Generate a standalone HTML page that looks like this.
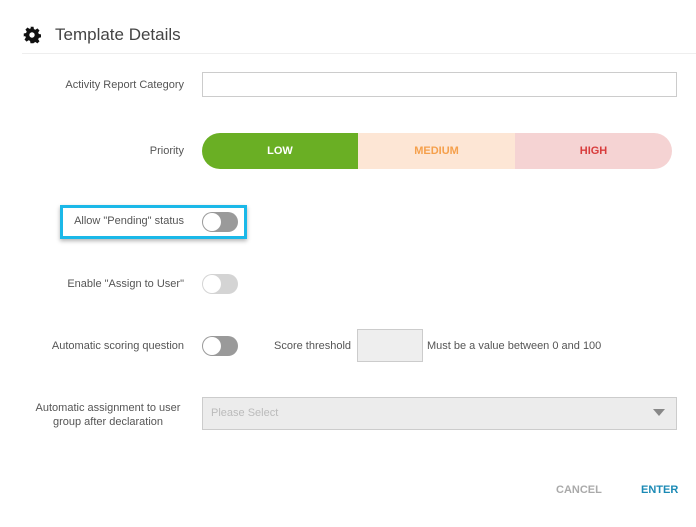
<!DOCTYPE html><html><head><style>
body{margin:0;width:696px;height:527px;background:#fff;font-family:"Liberation Sans",sans-serif;position:relative;overflow:hidden;color:#555}
.a{position:absolute}
.lbl{position:absolute;right:512px;font-size:11px;color:#555;text-align:right;white-space:nowrap}
.tg{position:absolute;left:202px;width:36px;height:20px;border-radius:10px;background:#9a9a9a}
.tg::after{content:"";position:absolute;left:1px;top:1px;width:18px;height:18px;border-radius:50%;background:#fff}
</style></head><body>
<svg class="a" style="left:23px;top:26px" width="18" height="18" viewBox="0 0 24 24"><path fill="#111" d="M10 1h4l.6 3.1 2 .9 2.6-1.8 2.8 2.8-1.8 2.6.9 2 3.1.6v4l-3.1.6-.9 2 1.8 2.6-2.8 2.8-2.6-1.8-2 .9L14 23h-4l-.6-3.1-2-.9-2.6 1.8-2.8-2.8 1.8-2.6-.9-2L1 14v-4l3.1-.6.9-2L3.2 4.8 6 2l2.6 1.8 2-.9z"/><circle cx="12" cy="12" r="3.6" fill="#fff"/></svg>
<div class="a" style="left:55px;top:25px;font-size:17px;color:#444">Template Details</div>
<div class="a" style="left:22px;top:53px;width:674px;height:1px;background:#eee"></div>
<div class="lbl" style="top:79px">Activity Report Category</div>
<div class="a" style="left:202px;top:72px;width:473px;height:23px;border:1px solid #ccc"></div>
<div class="lbl" style="top:145px">Priority</div>
<div class="a" style="left:202px;top:133px;width:470px;height:36px;border-radius:18px;overflow:hidden;display:flex;font-size:11px;font-weight:bold;line-height:37px;text-align:center">
<div style="width:156px;background:#6aaf24;color:#fff">LOW</div><div style="width:157px;background:#fde6d5;color:#f5a04c">MEDIUM</div><div style="flex:1;background:#f5d3d3;color:#d83c3c">HIGH</div></div>
<div class="a" style="left:60px;top:205px;width:181px;height:28px;border:3px solid #1bb8e8;box-shadow:0 2px 4px rgba(0,0,0,.3)"></div>
<div class="lbl" style="top:215px">Allow "Pending" status</div>
<div class="tg" style="top:212px"></div>
<div class="lbl" style="top:278px">Enable "Assign to User"</div>
<div class="tg" style="top:274px;background:#d4d4d4"></div>
<div class="lbl" style="top:340px">Automatic scoring question</div>
<div class="tg" style="top:336px"></div>
<div class="a" style="left:274px;top:340px;font-size:11px">Score threshold</div>
<div class="a" style="left:357px;top:329px;width:64px;height:31px;background:#eee;border:1px solid #ccc"></div>
<div class="a" style="left:427px;top:340px;font-size:11px">Must be a value between 0 and 100</div>
<div class="a" style="left:20px;width:176px;top:401px;font-size:11px;text-align:center;line-height:14px">Automatic assignment to user<br>group after declaration</div>
<div class="a" style="left:202px;top:397px;width:473px;height:31px;background:#ececec;border:1px solid #ccc"></div>
<div class="a" style="left:211px;top:407px;font-size:11px;color:#bbb">Please Select</div>
<div class="a" style="left:653px;top:409px;width:0;height:0;border-left:6px solid transparent;border-right:6px solid transparent;border-top:7px solid #888"></div>
<div class="a" style="left:556px;top:484px;font-size:11px;font-weight:bold;color:#aaa">CANCEL</div>
<div class="a" style="left:641px;top:484px;font-size:11px;font-weight:bold;color:#1b8ab5">ENTER</div>
</body></html>
